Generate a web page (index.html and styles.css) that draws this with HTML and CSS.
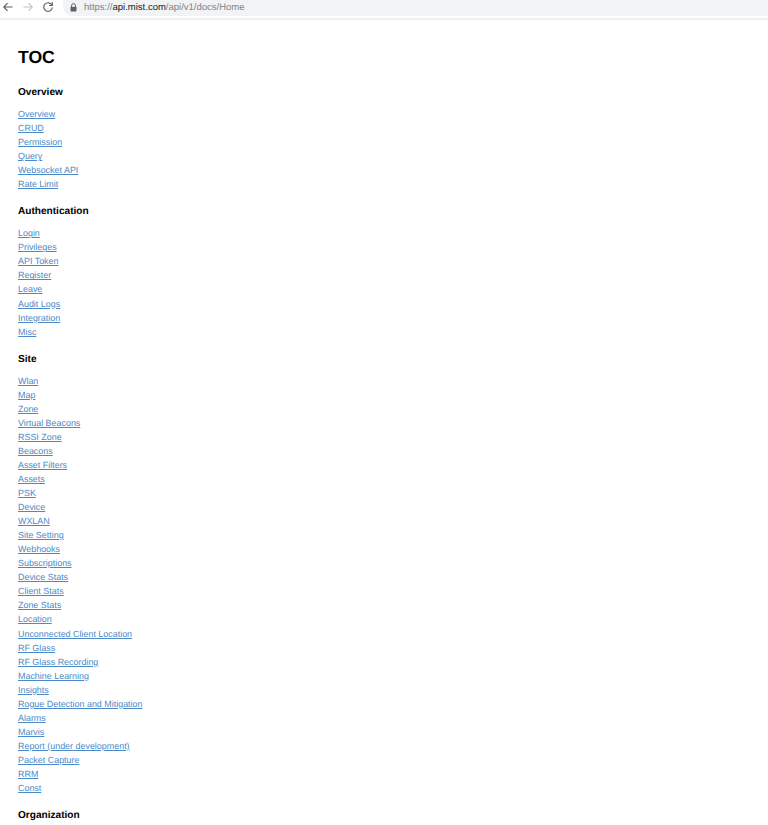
FILE: index.html
```html
<!DOCTYPE html>
<html lang="en">
<head>
<meta charset="utf-8">
<title>TOC</title>
<link rel="stylesheet" href="styles.css">
</head>
<body>
<header class="toolbar">
  <svg class="nav" width="12" height="12" viewBox="0 0 12 12"><path d="M10.5 6H2M5.5 2.2 1.8 6l3.7 3.8" fill="none" stroke="#5f6368" stroke-width="1.2"/></svg>
  <svg class="nav" width="12" height="12" viewBox="0 0 12 12"><path d="M1.5 6H10M6.5 2.2 10.2 6 6.500 9.800" fill="none" stroke="#c4c6c9" stroke-width="1.2"/></svg>
  <svg class="nav" width="12" height="12" viewBox="0 0 12 12"><path d="M9.800 4A4.300 4.300 0 1 0 10.300 6.500M10.300 1.300V4.500H7.100" fill="none" stroke="#5f6368" stroke-width="1.200"/></svg>
  <div class="omnibox">
    <svg class="lock" width="7" height="9" viewBox="0 0 7 9"><path d="M1.500 4V2.700a2 2 0 0 1 4 0V4" fill="none" stroke="#5f6368"/><rect x=".5" y="3.800" width="6" height="4.700" rx=".8" fill="#5f6368"/></svg>
    <span class="url">https://<b>api.mist.com</b>/api/v1/docs/Home</span>
  </div>
</header>
<div class="rule"></div>
<main class="doc">
  <h1>TOC</h1>
  <section>
    <h3>Overview</h3>
    <ul>
      <li><a href="#">Overview</a></li><li><a href="#">CRUD</a></li><li><a href="#">Permission</a></li><li><a href="#">Query</a></li><li><a href="#">Websocket API</a></li><li><a href="#">Rate Limit</a></li>
    </ul>
  </section>
  <section>
    <h3>Authentication</h3>
    <ul>
      <li><a href="#">Login</a></li><li><a href="#">Privileges</a></li><li><a href="#">API Token</a></li><li><a href="#">Register</a></li><li><a href="#">Leave</a></li><li><a href="#">Audit Logs</a></li><li><a href="#">Integration</a></li><li><a href="#">Misc</a></li>
    </ul>
  </section>
  <section>
    <h3>Site</h3>
    <ul>
      <li><a href="#">Wlan</a></li><li><a href="#">Map</a></li><li><a href="#">Zone</a></li><li><a href="#">Virtual Beacons</a></li><li><a href="#">RSSI Zone</a></li><li><a href="#">Beacons</a></li><li><a href="#">Asset Filters</a></li><li><a href="#">Assets</a></li><li><a href="#">PSK</a></li><li><a href="#">Device</a></li><li><a href="#">WXLAN</a></li><li><a href="#">Site Setting</a></li><li><a href="#">Webhooks</a></li><li><a href="#">Subscriptions</a></li><li><a href="#">Device Stats</a></li><li><a href="#">Client Stats</a></li><li><a href="#">Zone Stats</a></li><li><a href="#">Location</a></li><li><a href="#">Unconnected Client Location</a></li><li><a href="#">RF Glass</a></li><li><a href="#">RF Glass Recording</a></li><li><a href="#">Machine Learning</a></li><li><a href="#">Insights</a></li><li><a href="#">Rogue Detection and Mitigation</a></li><li><a href="#">Alarms</a></li><li><a href="#">Marvis</a></li><li><a href="#">Report (under development)</a></li><li><a href="#">Packet Capture</a></li><li><a href="#">RRM</a></li><li><a href="#">Const</a></li>
    </ul>
  </section>
  <section>
    <h3>Organization</h3>
  </section>
</main>
</body>
</html>
```
FILE: styles.css
```css
* { box-sizing: border-box; }
html, body { margin: 0; padding: 0; height: 825px; overflow: hidden; background: #fff; }
body { font-family: "Liberation Sans", Arial, sans-serif; color: #000; text-rendering: geometricPrecision; }

.toolbar { height: 16px; display: flex; align-items: flex-start; padding-left: 2px; gap: 8px; background: #fff; overflow: hidden; }
.nav { flex: none; margin-top: 1px; }
.omnibox { flex: 1; height: 16px; margin-left: 1px; padding-left: 7px; background: #f1f3f4; border-radius: 0 0 0 9px; display: flex; align-items: center; gap: 7px; }
.lock { flex: none; margin-top: -2px; }
.url { font-size: 9.5px; color: #80868b; margin-top: -2px; white-space: nowrap; }
.url b { font-weight: 400; color: #202124; }
.rule { height: 2px; margin-top: 2px; background: #eeeff1; }

.doc { padding: 0 18px; }
h1 { margin: 0; padding-top: 26px; font-size: 17.6px; line-height: 23px; font-weight: 700; }
h3 { margin: 0; font-size: 10.1px; line-height: 14px; font-weight: 700; }
section { margin-top: 17px; }
section + section { margin-top: 14px; }
ul { list-style: none; margin: 7px 0 0; padding: 0; }
li { font-size: 8.93px; line-height: 14.05px; height: 14.05px; white-space: nowrap; }
a { color: #4a8ac9; text-decoration: underline; }
```
